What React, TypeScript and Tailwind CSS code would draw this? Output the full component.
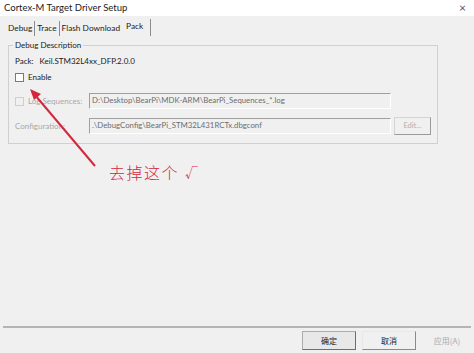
const UI = { fontFamily: 'Lato, "Noto Sans CJK SC", sans-serif' };

function Checkbox({ disabled }: { disabled?: boolean }) {
  return (
    <span
      className={`inline-block h-[9px] w-[9px] shrink-0 border ${
        disabled ? "border-[#cfcfcf] bg-[#f0f0f0]" : "border-[#7a7a7a] bg-white"
      }`}
    />
  );
}

function Field({ value }: { value: string }) {
  return (
    <div className="flex h-[16px] w-[302px] items-center whitespace-nowrap border-t border-l border-t-[#a0a0a0] border-l-[#a0a0a0] border-b border-r border-b-white border-r-white bg-[#f0f0f0] px-[2px] text-[7.8px] leading-none text-[#6d6d6d]">
      {value}
    </div>
  );
}

export default function App() {
  return (
    <div
      className="relative h-[353px] w-[474px] overflow-hidden bg-[#f0f0f0] text-[#1a1a1a]"
      style={UI}
    >
      {/* title bar */}
      <div className="flex h-[16px] items-center justify-between bg-white pl-[4px] pr-[8px] text-[9.5px]">
        <span>Cortex-M Target Driver Setup</span>
        <span className="text-[12px] leading-none text-[#555]">×</span>
      </div>

      {/* tabs */}
      <div className="flex h-[20px] items-end pl-[8px] text-[8.3px] leading-none">
        <span className="flex h-[15px] items-center border-r border-[#8c8c8c] pr-[2px]">Debug</span>
        <span className="flex h-[15px] items-center border-r border-[#8c8c8c] px-[2px]">Trace</span>
        <span className="flex h-[15px] items-center pl-[2px] pr-[5px]">Flash Download</span>
        <span className="flex h-[17px] items-center border-r border-[#8c8c8c] pl-[1px] pr-[7px] pb-[3px]">Pack</span>
      </div>

      {/* tab page */}
      <div className="mx-[3px] h-[292px] border-b-2 border-[#b4b4b4] pt-[3px] pl-[5px]">
        <fieldset className="h-[105px] w-[428px] border border-[#d0d0d0] px-[6px] text-[8px] leading-none">
          <legend className="-ml-[2px] px-[2px] text-[8px] leading-[12px]">Debug Description</legend>
          <div className="mt-[3px] flex h-[14px] items-center gap-[6px]">
            <span>Pack:</span>
            <span>Keil.STM32L4xx_DFP.2.0.0</span>
          </div>
          <div className="mt-[2px] flex h-[14px] items-center gap-[4px]">
            <Checkbox />
            <span>Enable</span>
          </div>
          <div className="mt-[9px] flex items-center">
            <div className="flex w-[74px] items-center gap-[4px] whitespace-nowrap text-[#a8a8a8]">
              <Checkbox disabled />
              <span>Log Sequences:</span>
            </div>
            <Field value="D:\Desktop\BearPi\MDK-ARM\BearPi_Sequences_*.log" />
          </div>
          <div className="mt-[8px] flex items-center">
            <div className="w-[74px] whitespace-nowrap text-[#a8a8a8]">Configuration:</div>
            <Field value=".\DebugConfig\BearPi_STM32L431RCTx.dbgconf" />
            <div className="ml-[3px] flex h-[18px] w-[37px] items-center justify-center border border-[#d4d4d4] border-b-[#9a9a9a] border-r-[#9a9a9a] text-[7.5px] text-[#b0b0b0]">
              Edit...
            </div>
          </div>
        </fieldset>

        <div
          className="mt-[17px] ml-[101px] flex items-center text-[16px] font-light leading-[22px] text-[#d3273c]"
          style={{ fontFamily: '"Noto Sans CJK SC", sans-serif' }}
        >
          <span className="tracking-[1.5px]">去掉这个</span>
          <span className="ml-[6px] text-[13px]">√</span>
        </div>
      </div>

      {/* buttons */}
      <div
        className="mt-[3px] flex justify-end gap-[6px] pr-[2px] text-[8px] leading-none"
        style={{ fontFamily: '"Noto Sans CJK SC", sans-serif' }}
      >
        <div className="flex h-[19px] w-[54px] items-center justify-center border border-[#adadad] border-b-[#6e6e6e] border-r-[#6e6e6e] bg-[#e8e8e8]">确定</div>
        <div className="flex h-[19px] w-[54px] items-center justify-center border border-[#e8e8e8] border-b-[#8a8a8a] border-r-[#8a8a8a]">取消</div>
        <div className="flex h-[19px] w-[50px] items-center justify-center text-[#a8a8a8]">应用(A)</div>
      </div>

      {/* red arrow annotation */}
      <svg className="pointer-events-none absolute left-0 top-0" width="474" height="353">
        <line x1="95" y1="166" x2="35" y2="95" stroke="#d5273c" strokeWidth="2" />
        <polygon points="30,89 41,94 34,100" fill="#d5273c" />
      </svg>
    </div>
  );
}
